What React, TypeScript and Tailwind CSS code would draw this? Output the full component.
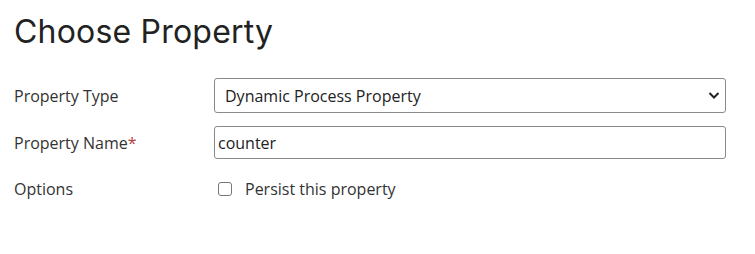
export default function App() {
  return (
    <div className="w-[755px] h-[254px] bg-white px-[14px] pt-[12px] font-['Open_Sans',sans-serif] text-[16px] text-[#333]">
      <h1 className="font-['Inter',sans-serif] text-[32px] font-normal leading-[40px] text-[#222] tracking-[0.2px]">
        Choose Property
      </h1>
      <div className="mt-[26px] flex flex-col">
        <div className="flex items-center h-[35px]">
          <label className="w-[200px]">Property Type</label>
          <div className="relative w-[512px] h-[35px]">
            <select className="w-full h-full appearance-none rounded-[3px] border border-[#8a8a8a] bg-white pl-[10px] pr-8 text-[16px] text-[#222] outline-none">
              <option>Dynamic Process Property</option>
            </select>
            <svg
              className="pointer-events-none absolute right-[6px] top-[13px]"
              width="12"
              height="9"
              viewBox="0 0 12 9"
            >
              <path d="M1.5 2 L6 6.5 L10.5 2" fill="none" stroke="#222" strokeWidth="2" />
            </svg>
          </div>
        </div>
        <div className="mt-[13px] flex items-center h-[33px]">
          <label className="w-[200px]">
            Property Name<span className="text-[#b0413e]">*</span>
          </label>
          <input
            defaultValue="counter"
            className="w-[512px] h-[33px] rounded-[3px] border border-[#8a8a8a] bg-white pl-[3px] text-[16px] text-[#222] outline-none"
          />
        </div>
        <div className="mt-[15px] flex items-center h-[30px]">
          <label className="w-[204px]">Options</label>
          <label className="flex items-center gap-[13px]">
            <span className="inline-block w-[14px] h-[14px] rounded-[3px] border border-[#767676] bg-white" />
            <span>Persist this property</span>
          </label>
        </div>
      </div>
    </div>
  );
}
